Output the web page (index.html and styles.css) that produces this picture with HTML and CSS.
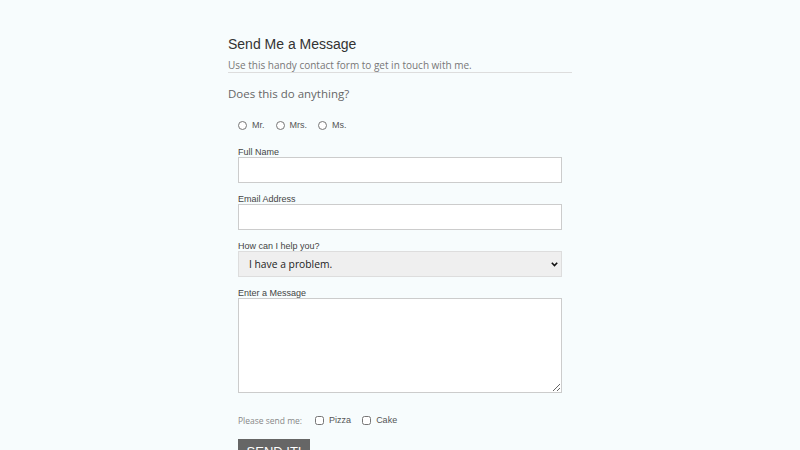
FILE: index.html
```html
<!DOCTYPE html>
<html>
<head>
<meta charset="utf-8">
<link rel="stylesheet" href="styles.css">
</head>
<body>
<div class="wrap">
  <h1 class="title">Send Me a Message</h1>
  <p class="sub">Use this handy contact form to get in touch with me.</p>
  <h2 class="q">Does this do anything?</h2>
  <form class="form">
    <div class="radios">
      <label class="opt"><input type="radio" name="t" class="radio"> Mr.</label>
      <label class="opt"><input type="radio" name="t" class="radio"> Mrs.</label>
      <label class="opt"><input type="radio" name="t" class="radio"> Ms.</label>
    </div>
    <label class="lbl">Full Name</label>
    <input class="field" type="text">
    <label class="lbl">Email Address</label>
    <input class="field" type="text">
    <label class="lbl">How can I help you?</label>
    <div class="selwrap">
      <select class="sel"><option>I have a problem.</option></select>
      <svg class="chev" width="7" height="5" viewBox="0 0 7 5"><path d="M0.8 0.8 L3.5 3.6 L6.2 0.8" fill="none" stroke="#111" stroke-width="1.6"/></svg>
    </div>
    <label class="lbl">Enter a Message</label>
    <textarea class="area"></textarea>
    <div class="checks">
      <span class="send">Please send me:</span>
      <label class="opt"><input type="checkbox" class="chk"> Pizza</label>
      <label class="opt"><input type="checkbox" class="chk"> Cake</label>
    </div>
    <button type="button" class="btn">SEND IT!</button>
  </form>
</div>
</body>
</html>
```
FILE: styles.css
```css
html, body { margin: 0; padding: 0; }
body { background: #f7fcfd; font-family: "Liberation Sans", Arial, sans-serif; }
.wrap { width: 344px; margin: 0 auto; padding-top: 35px; }
.title { margin: 0; font-size: 14px; font-weight: normal; color: #333; line-height: 18px; }
.sub { margin: 5px 0 0; font-family: "Open Sans", sans-serif; font-size: 10px; color: #777; line-height: 14px; padding-bottom: 0; border-bottom: 1px solid #ddd; }
.q { margin: 13px 0 0; font-family: "Open Sans", sans-serif; font-weight: normal; font-size: 11.5px; color: #666; line-height: 16px; }
.form { padding: 0 10px; display: flex; flex-direction: column; }
.radios { display: flex; gap: 11px; margin-top: 18px; height: 10px; }
.opt { display: flex; align-items: center; font-size: 9px; color: #555; gap: 5px; line-height: 10px; }
.radio { width: 9px; height: 9px; margin: 0; }
.lbl { font-size: 9px; color: #444; margin-top: 11px; line-height: 10px; }
.radios + .lbl { margin-top: 17px; }
.field { margin: 0; height: 26px; box-sizing: border-box; border: 1px solid #ccc; background: #fff; }
.selwrap { position: relative; display: flex; }
.sel { flex: 1; margin: 0; height: 26px; box-sizing: border-box; border: 1px solid #ddd; border-radius: 0; background: #efefef; font-family: "Open Sans", sans-serif; font-size: 10.3px; color: #222; padding: 0 10px; -webkit-appearance: none; appearance: none; }
.chev { position: absolute; right: 4px; top: 11px; pointer-events: none; }
.area { margin: 0; height: 95px; box-sizing: border-box; border: 1px solid #ccc; background: #fff; resize: vertical; }
.checks { display: flex; align-items: center; gap: 11px; margin-top: 22px; height: 10px; }
.send { font-family: "Open Sans", sans-serif; font-size: 8.5px; color: #888; margin-right: 2px; }
.chk { width: 9px; height: 9px; margin: 0; }
.btn { align-self: flex-start; margin-top: 14px; background: #666; color: #fff; border: 0; font-family: "Liberation Sans", Arial, sans-serif; font-size: 13px; padding: 3px 0 0; width: 72px; height: 22px; line-height: 16px; }
```
